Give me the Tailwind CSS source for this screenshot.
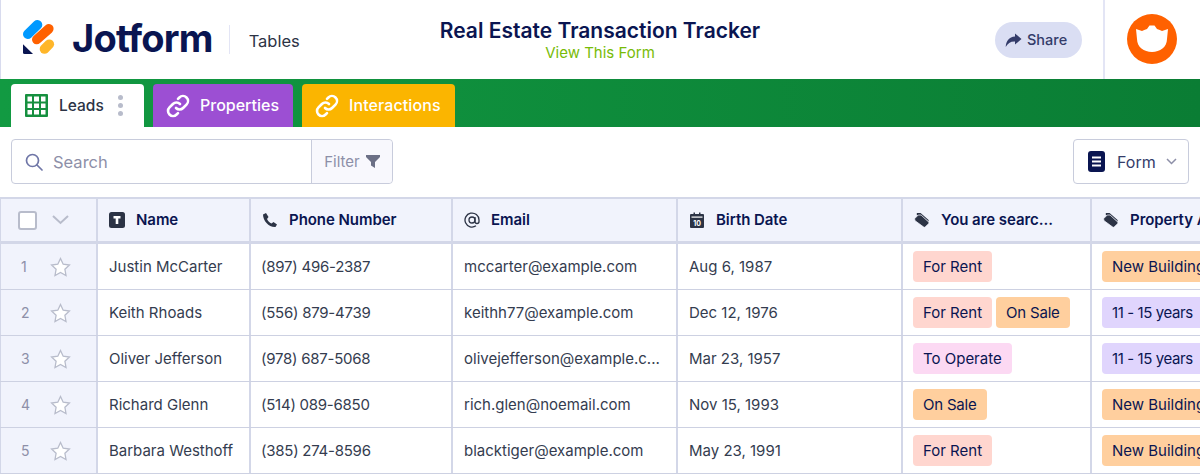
<!DOCTYPE html>
<html lang="en">

<head>
    <meta charset="UTF-8">
    <meta name="viewport" content="width=device-width, initial-scale=1.0">
    <title>Real Estate Transaction Tracker</title>
    <script src="https://cdn.jsdelivr.net/npm/@tailwindcss/browser@4"></script>
</head>

<body class="bg-white h-[474px] w-[1200px] overflow-hidden font-['Inter',sans-serif] text-[#0a1551]">
    <!-- Header -->
    <header class="h-[79px] flex border-l border-[#d8dbee] bg-white">
        <div class="w-[339px] flex items-center shrink-0">
            <svg class="ml-[22px] mb-[6px] w-[33px] h-[34px] shrink-0" viewBox="0 0 33 34" fill="none" stroke-width="9.600" stroke-linecap="round">
                <path d="M4.800 14.200L14.500 4.800" stroke="#0099ff" />
                <path d="M13.800 19.500L25.800 8.800" stroke="#ff6100" />
                <path d="M21.500 29L26.300 24.200" stroke="#ffb629" />
                <path d="M0 24.300L10 34H1.500Q0 34 0 32.500Z" fill="#0a1551" stroke="none" />
            </svg>
            <span class="ml-4 mb-[3px] text-[38px] font-bold tracking-[-0.8px] leading-none">Jotform</span>
            <span class="ml-4 w-px h-[29px] bg-[#e3e5f5]"></span>
            <span class="ml-[19px] pt-[3px] text-[16.5px] text-[#2c3345]">Tables</span>
        </div>
        <div class="w-[520px] flex flex-col items-center pt-[18px]">
            <h1 class="text-[21px] font-semibold leading-[26px]">Real Estate Transaction Tracker</h1>
            <a class="text-[15px] leading-[17px] text-[#78bb07]">View This Form</a>
        </div>
        <div class="flex-1 flex items-start pt-[22px] pl-[135px]">
            <button class="w-[87px] h-9 rounded-full bg-[#dadef3] flex items-center pl-[10px] gap-[5px] text-[14.5px] text-[#343c6a] font-medium">
                <svg class="w-[17px] h-[15px]" viewBox="0 0 17 15"><path d="M10 0.500L16.500 6L10 11.500V8.400C5.500 8.200 2.800 10 0.700 14C1 8 4 3.800 10 3.400Z" fill="#343c6a" /></svg>
                Share
            </button>
        </div>
        <div class="w-[97px] border-l-2 border-[#e3e5f5] flex items-start pl-[22px] pt-[14px] shrink-0">
            <svg class="w-[50px] h-[50px]" viewBox="0 0 50 50">
                <circle cx="25" cy="25" r="25" fill="#ff6100" />
                <path d="M9 15L15 17Q17 16 20 15L22.500 11.500H27.500L30 15Q33 16 35 17L41 15L40 25C40 33 33 38 25 38C17 38 10 33 10 25Z" fill="#fff" />
            </svg>
        </div>
    </header>

    <!-- Tabs -->
    <nav class="h-12 bg-gradient-to-r from-[#129a42] to-[#0a7d34] flex items-end pl-[11px] gap-[9px]">
        <div class="w-[133px] h-[43px] bg-white rounded-t flex items-center pl-[14px] text-[15.5px] font-medium text-[#2c3345]">
            <svg class="w-[23px] h-[23px] shrink-0" viewBox="0 0 23 23" fill="#16903f">
                <path fill-rule="evenodd" d="M1 0h21a1 1 0 0 1 1 1v21a1 1 0 0 1-1 1H1a1 1 0 0 1-1-1V1a1 1 0 0 1 1-1zm1.500 2.500v5h4.500v-5zm6.500 0v5h5v-5zm7 0v5h4.500v-5zm-13.500 7v4.500h4.500V9.500zm6.500 0v4.500h5V9.500zm7 0v4.500h4.500V9.500zm-13.500 6.500v4.500h4.500V16zm6.500 0v4.500h5V16zm7 0v4.500h4.500V16z" />
            </svg>
            <span class="ml-[11px] pt-px">Leads</span>
            <span class="ml-[14px] flex flex-col gap-[3px]">
                <i class="block w-[5px] h-[5px] rounded-full bg-[#b8bccb]"></i>
                <i class="block w-[5px] h-[5px] rounded-full bg-[#b8bccb]"></i>
                <i class="block w-[5px] h-[5px] rounded-full bg-[#b8bccb]"></i>
            </span>
        </div>
        <div class="w-[140px] h-[43px] bg-[#9c4fd3] rounded-t flex items-center pl-[13px] text-[16px] font-medium text-white">
            <svg class="w-[24px] h-[24px] shrink-0" viewBox="0 0 24 24" fill="none" stroke="#fff" stroke-width="2.600" stroke-linecap="round">
                <path d="M10 14a5 5 0 0 0 7.100 0l3.400-3.400a5 5 0 0 0-7.100-7.100l-1.400 1.400" />
                <path d="M14 10a5 5 0 0 0-7.100 0l-3.400 3.400a5 5 0 0 0 7.100 7.100l1.400-1.400" />
            </svg>
            <span class="ml-[10px] pb-px">Properties</span>
        </div>
        <div class="w-[153px] h-[43px] bg-[#fbb500] rounded-t flex items-center pl-[13px] text-[16px] font-medium text-white">
            <svg class="w-[24px] h-[24px] shrink-0" viewBox="0 0 24 24" fill="none" stroke="#fff" stroke-width="2.600" stroke-linecap="round">
                <path d="M10 14a5 5 0 0 0 7.100 0l3.400-3.400a5 5 0 0 0-7.100-7.100l-1.400 1.400" />
                <path d="M14 10a5 5 0 0 0-7.100 0l-3.400 3.400a5 5 0 0 0 7.100 7.100l1.400-1.400" />
            </svg>
            <span class="ml-[10px] pb-px tracking-[0.1px]">Interactions</span>
        </div>
    </nav>

    <!-- Toolbar -->
    <div class="h-[70px] flex items-start justify-between pt-3 pl-[11px] pr-[11px]">
        <div class="w-[382px] h-[45px] flex border border-[#c8ccdc] rounded">
            <div class="flex-1 flex items-center pl-[13px] gap-[10px] text-[16.5px] text-[#8d8fa8]">
                <svg class="w-[18px] h-[18px]" viewBox="0 0 18 18" fill="none" stroke="#6f76a7" stroke-width="1.700"><circle cx="7.500" cy="7.500" r="6" /><path d="M12 12l5 5" stroke-linecap="round" /></svg>
                <span class="pt-px">Search</span>
            </div>
            <div class="w-[81px] border-l border-[#c8ccdc] bg-[#f8f8fd] rounded-r flex items-center justify-center gap-[6px] text-[15px] text-[#8d8fa8]">
                <span class="pt-px">Filter</span>
                <svg class="w-[14px] h-[13px]" viewBox="0 0 14 13" fill="#6c7086"><path d="M0 0h14v2L9 7v6L5 10.500V7L0 2z" /></svg>
            </div>
        </div>
        <div class="w-[116px] h-[45px] border border-[#c8ccdc] rounded flex items-center pl-[14px] text-[16px] text-[#343c6a]">
            <svg class="w-[17px] h-[21px] shrink-0" viewBox="0 0 17 21">
                <rect width="17" height="21" rx="3" fill="#0a1551" />
                <path d="M4 6.500h9M4 10.500h9M4 14.500h9" stroke="#fff" stroke-width="2" />
            </svg>
            <span class="ml-3">Form</span>
            <svg class="ml-[10px] w-[11px] h-[7px]" viewBox="0 0 11 7" fill="none" stroke="#8d8fa8" stroke-width="1.500"><path d="M1 1l4.500 4.500L10 1" /></svg>
        </div>
    </div>

    <!-- Table -->
    <div id="table" class="w-[1200px] overflow-hidden border-t-2 border-[#d3d7e8]"></div>

    <script>
        const tagIcon = `<svg class="w-4 h-4 shrink-0" viewBox="0 0 17 17" fill="#2c3345"><path d="M3 1H7L15.500 8.500V10L7 3.500H3Z" /><path d="M0.800 7L4.500 3.200H7.500L15.500 10.500Q16.500 11.500 15.500 12.500L12 15.800Q11 16.800 10 15.800L1.500 9.500Q0.800 9 0.800 8Z" stroke="#f1f3fc" stroke-width="0.800" /></svg>`;
        const columns = [
            { label: "Name", width: "w-[153px]", icon: `<svg class="w-4 h-4 shrink-0" viewBox="0 0 16 16"><rect width="16" height="16" rx="2.500" fill="#2c3345" /><path d="M4.500 4h7v2.500h-2.200V12H6.700V6.500H4.500z" fill="#fff" /></svg>` },
            { label: "Phone Number", width: "w-[202px]", icon: `<svg class="w-4 h-4 shrink-0" viewBox="0 0 16 16" fill="#2c3345"><path d="M1 2.500L4 1L6.500 5L5 7C6 9 7.500 10.500 9.500 11.500L11.500 10L15 12.500L13.500 15C7 15.500 1 9 1 2.500Z" /></svg>` },
            { label: "Email", width: "w-[225px]", icon: `<svg class="w-4 h-4 shrink-0" viewBox="0 0 16 16" fill="none" stroke="#2c3345" stroke-width="1.300"><circle cx="8" cy="8" r="3" /><path d="M11 5v4.500a2 2 0 0 0 4 0V8a7 7 0 1 0-3 5.800" /></svg>` },
            { label: "Birth Date", width: "w-[225px]", icon: `<svg class="w-4 h-4 shrink-0" viewBox="0 0 16 16"><path d="M2 2h2.500V0.500h1.500V2h4V0.500h1.500V2H14a1 1 0 0 1 1 1v12a1 1 0 0 1-1 1H2a1 1 0 0 1-1-1V3a1 1 0 0 1 1-1z" fill="#2c3345" /><rect x="2.500" y="4.500" width="11" height="1.200" fill="#fff" /><text x="8" y="14" font-size="7" font-weight="700" fill="#fff" text-anchor="middle">10</text></svg>` },
            { label: "You are searc...", width: "w-[189px]", icon: tagIcon },
            { label: "Property Age", width: "w-[120px]", icon: tagIcon }
        ];

        const tagColors = {
            "For Rent": "bg-[#ffd6cf]",
            "On Sale": "bg-[#ffcf9e] tracking-[-0.2px]",
            "To Operate": "bg-[#fcd9f3]",
            "New Building": "bg-[#ffcf9e]",
            "11 - 15 years": "bg-[#e0d5fd] tracking-[-0.4px]"
        };

        const rows = [
            ["Justin McCarter", "(897) 496-2387", "mccarter@example.com", "Aug 6, 1987", ["For Rent"], "New Building"],
            ["Keith Rhoads", "(556) 879-4739", "keithh77@example.com", "Dec 12, 1976", ["For Rent", "On Sale"], "11 - 15 years"],
            ["Oliver Jefferson", "(978) 687-5068", "olivejefferson@example.c...", "Mar 23, 1957", ["To Operate"], "11 - 15 years"],
            ["Richard Glenn", "(514) 089-6850", "rich.glen@noemail.com", "Nov 15, 1993", ["On Sale"], "New Building"],
            ["Barbara Westhoff", "(385) 274-8596", "blacktiger@example.com", "May 23, 1991", ["For Rent"], "New Building"]
        ];

        const star = `<svg class="w-[21px] h-[20px]" viewBox="0 0 21 20" fill="#fff" stroke="#b8bccb" stroke-width="1.300"><path d="M10.500 1.500l2.700 5.700 6.200.8-4.500 4.300 1.100 6.200-5.500-3-5.500 3 1.100-6.200L1.600 8l6.200-.8z" /></svg>`;

        function tag(text) {
            return `<span class="h-[31px] px-[10px] pt-px rounded flex items-center whitespace-nowrap text-[15px] text-[#0a1551] ${tagColors[text]}">${text}</span>`;
        }

        function renderHeader() {
            let html = `<div class="flex h-[45px] w-[1400px] bg-[#f1f3fc] border-b-[3px] border-[#d3d7e8]">
                <div class="w-[98px] shrink-0 border-r-2 border-[#d3d7e8] flex items-center pl-[17px] border-l border-l-[#d3d7e8]">
                    <span class="w-[19px] h-[19px] rounded-[3px] border-2 border-[#b8bccb] bg-white"></span>
                    <svg class="ml-[15px] w-[17px] h-[10px]" viewBox="0 0 17 10" fill="none" stroke="#b8bccb" stroke-width="2"><path d="M1 1l7.500 7L16 1" /></svg>
                </div>`;
            columns.forEach(col => {
                html += `<div class="${col.width} shrink-0 border-r-2 border-[#d3d7e8] flex items-center pl-[11px] gap-[11px] text-[15px] font-semibold text-[#0a1551]">${col.icon}<span class="whitespace-nowrap tracking-[-0.05px]">${col.label}</span></div>`;
            });
            return html + `</div>`;
        }

        function renderRow(row, i) {
            return `<div class="flex h-[46px] w-[1400px] border-b border-[#cdd1e2] text-[15px] text-[#343c4f]">
                <div class="w-[98px] shrink-0 bg-[#f1f3fc] border-r-2 border-l border-[#d3d7e8] flex items-center pl-[20px] text-[#8d8fa8] text-[14px]">
                    <span class="w-[14px]">${i + 1}</span><span class="ml-[15px]">${star}</span>
                </div>
                <div class="w-[153px] shrink-0 border-r-2 border-[#d3d7e8] flex items-center pl-[11px] pt-px whitespace-nowrap">${row[0]}</div>
                <div class="w-[202px] shrink-0 border-r-2 border-[#d3d7e8] flex items-center pl-[10px] pt-px whitespace-nowrap tracking-[-0.25px]">${row[1]}</div>
                <div class="w-[225px] shrink-0 border-r-2 border-[#d3d7e8] flex items-center pl-[11px] pt-px whitespace-nowrap">${row[2]}</div>
                <div class="w-[225px] shrink-0 border-r-2 border-[#d3d7e8] flex items-center pl-[11px] pt-px whitespace-nowrap">${row[3]}</div>
                <div class="w-[189px] shrink-0 border-r-2 border-[#d3d7e8] flex items-center pl-[10px] gap-1">${row[4].map(tag).join("")}</div>
                <div class="w-[120px] shrink-0 flex items-center pl-[10px]">${tag(row[5])}</div>
            </div>`;
        }

        document.getElementById("table").innerHTML = renderHeader() + rows.map(renderRow).join("");
    </script>
</body>

</html>
